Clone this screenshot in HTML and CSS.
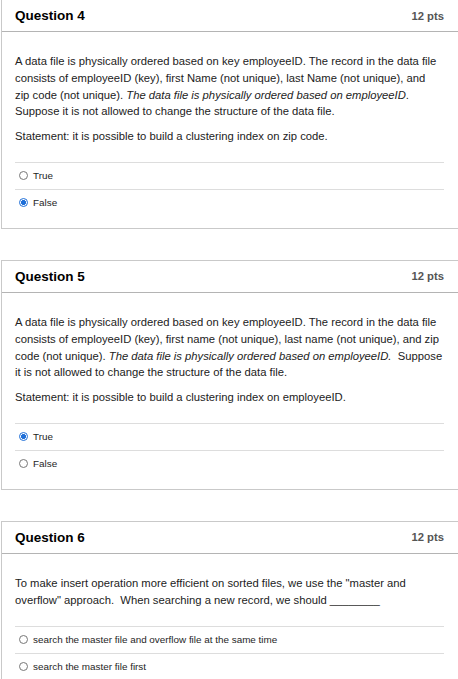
FILE: index.html
```html
<!DOCTYPE html>
<html lang="en">
<head>
<meta charset="utf-8">
<title>Quiz</title>
<link rel="stylesheet" href="styles.css">
</head>
<body>
<div class="page">
  <section class="card first">
    <header class="card-header">
      <h2 class="title">Question 4</h2>
      <span class="pts">12 pts</span>
    </header>
    <div class="card-body">
      <div class="text">
        <p>A data file is physically ordered based on key employeeID. The record in the data file<br>consists of employeeID (key), first Name (not unique), last Name (not unique), and<br>zip code (not unique). <em>The data file is physically ordered based on employeeID</em>.<br>Suppose it is not allowed to change the structure of the data file.</p>
        <p>Statement: it is possible to build a clustering index on zip code.</p>
      </div>
      <ul class="answers">
        <li class="answer"><span class="radio"></span><span class="label">True</span></li>
        <li class="answer"><span class="radio checked"></span><span class="label">False</span></li>
      </ul>
    </div>
  </section>

  <section class="card">
    <header class="card-header">
      <h2 class="title">Question 5</h2>
      <span class="pts">12 pts</span>
    </header>
    <div class="card-body">
      <div class="text">
        <p>A data file is physically ordered based on key employeeID. The record in the data file<br>consists of employeeID (key), first name (not unique), last name (not unique), and zip<br>code (not unique). <em>The data file is physically ordered based on employeeID.</em>&nbsp; Suppose<br>it is not allowed to change the structure of the data file.</p>
        <p>Statement: it is possible to build a clustering index on employeeID.</p>
      </div>
      <ul class="answers">
        <li class="answer"><span class="radio checked"></span><span class="label">True</span></li>
        <li class="answer"><span class="radio"></span><span class="label">False</span></li>
      </ul>
    </div>
  </section>

  <section class="card">
    <header class="card-header">
      <h2 class="title">Question 6</h2>
      <span class="pts">12 pts</span>
    </header>
    <div class="card-body">
      <div class="text">
        <p>To make insert operation more efficient on sorted files, we use the "master and<br>overflow" approach.&nbsp; When searching a new record, we should ________</p>
      </div>
      <ul class="answers">
        <li class="answer"><span class="radio"></span><span class="label">search the master file and overflow file at the same time</span></li>
        <li class="answer"><span class="radio"></span><span class="label">search the master file first</span></li>
      </ul>
    </div>
  </section>
</div>
</body>
</html>
```
FILE: styles.css
```css
html, body {
  margin: 0;
  padding: 0;
  background: #ffffff;
}

body {
  font-family: "Liberation Sans", Arial, Helvetica, sans-serif;
  color: #222222;
}

.page {
  display: flex;
  flex-direction: column;
}

.card {
  margin: 0 0 31px 1px;
  border: 1px solid #c9c9c9;
  border-right: 0;
  background: #ffffff;
}

.card.first {
  margin-top: -1px;
}

.card-header {
  height: 31px;
  display: flex;
  align-items: center;
  justify-content: space-between;
  padding: 0 14px 0 13px;
  border-bottom: 1px solid #b4b4b4;
}

.title {
  margin: 0;
  font-size: 13.5px;
  font-weight: bold;
  color: #000000;
}

.pts {
  font-size: 11.25px;
  font-weight: bold;
  color: #555555;
}

.card-body {
  padding: 21px 14px 12px 13px;
}

.text p {
  margin: 0 0 8px 0;
  font-size: 11.25px;
  line-height: 16.8px;
  white-space: nowrap;
}

.text p:last-child {
  margin-bottom: 0;
}

.answers {
  list-style: none;
  margin: 17px 0 0 0;
  padding: 0;
}

.answer {
  height: 26px;
  display: flex;
  align-items: center;
  gap: 5px;
  padding-left: 4px;
  border-top: 1px solid #dddddd;
  font-size: 9.9px;
  color: #1e1e1e;
}

.radio {
  width: 9px;
  height: 9px;
  box-sizing: border-box;
  border-radius: 50%;
  border: 1px solid #777777;
  background: #ffffff;
  flex: none;
}

.radio.checked {
  border: 1px solid #1f6fd8;
  background: radial-gradient(circle, #1f6fd8 0 2.2px, #ffffff 2.8px);
}
```
